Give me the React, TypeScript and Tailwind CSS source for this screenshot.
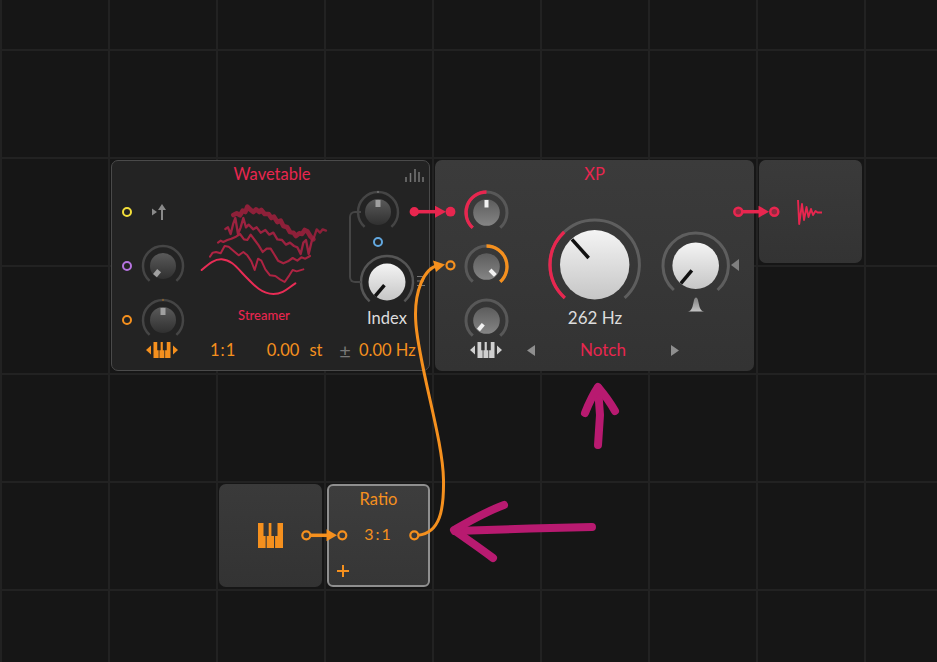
import React from "react";

const RED = "#e8264f";
const ORANGE = "#f5901e";

function polar(c: number, r: number, deg: number) {
  const a = ((deg - 90) * Math.PI) / 180;
  return [c + r * Math.cos(a), c + r * Math.sin(a)];
}
function arc(c: number, r: number, a: number, b: number) {
  const [x1, y1] = polar(c, r, a);
  const [x2, y2] = polar(c, r, b);
  const large = b - a > 180 ? 1 : 0;
  return `M${x1} ${y1}A${r} ${r} 0 ${large} 1 ${x2} ${y2}`;
}

type KnobProps = {
  id: string;
  ring: number;
  inner: number;
  ringWidth?: number;
  ringColor: string;
  top: string;
  bottom: string;
  angle: number;
  r1: number;
  r2: number;
  needle: string;
  needleWidth: number;
  value?: [number, number, string];
  tick?: string;
  className?: string;
};

function Knob(p: KnobProps) {
  const size = (p.ring + 3) * 2;
  const c = p.ring + 3;
  const [x1, y1] = polar(c, p.r1, p.angle);
  const [x2, y2] = polar(c, p.r2, p.angle);
  const w = p.ringWidth ?? 2.5;
  const [tx1, ty1] = polar(c, p.ring - 1, 0);
  const [tx2, ty2] = polar(c, p.ring + 1, 0);
  return (
    <svg width={size} height={size} viewBox={`0 0 ${size} ${size}`} className={`block shrink-0 ${p.className ?? ""}`}>
      <defs>
        <linearGradient id={p.id} x1="0" y1="0" x2="0" y2="1">
          <stop offset="0" stopColor={p.top} />
          <stop offset="1" stopColor={p.bottom} />
        </linearGradient>
      </defs>
      <path d={arc(c, p.ring, -138, 138)} fill="none" stroke={p.ringColor} strokeWidth={w} />
      {p.value && <path d={arc(c, p.ring, p.value[0], p.value[1])} fill="none" stroke={p.value[2]} strokeWidth={w + 0.3} />}
      {p.tick && <line x1={tx1} y1={ty1} x2={tx2} y2={ty2} stroke={p.tick} strokeWidth={2} />}
      <circle cx={c} cy={c} r={p.inner} fill={`url(#${p.id})`} />
      <line x1={x1} y1={y1} x2={x2} y2={y2} stroke={p.needle} strokeWidth={p.needleWidth} />
    </svg>
  );
}

function Piano({ color, w, h }: { color: string; w: number; h: number }) {
  return (
    <svg width={w} height={h} viewBox="0 0 25 25" className="block shrink-0" fill={color}>
      <path d="M0 0H5.5V13H7.6V25H0Z" />
      <path d="M10.7 0H13.4V13H16V25H8.7V13H10.7Z" />
      <path d="M19.5 0H25V25H17.1V13H19.5Z" />
    </svg>
  );
}

function PianoSwitch({ color }: { color: string }) {
  return (
    <svg width="32" height="16" viewBox="0 0 32 16" className="block" fill={color}>
      <path d="M0 8L5 3.5V12.5Z" />
      <path d="M32 8L27 3.5V12.5Z" />
      <g transform="translate(7.5 0) scale(0.68 0.64)">
        <path d="M0 0H5.5V13H7.6V25H0Z" />
        <path d="M10.5 0H13.7V13H16V25H8.7V13H10.5Z" />
        <path d="M19.5 0H25V25H17.1V13H19.5Z" />
      </g>
    </svg>
  );
}

function PortRing({ color }: { color: string }) {
  return <div className="w-[10px] h-[10px] rounded-full border-2 bg-transparent" style={{ borderColor: color }} />;
}

const darkKnob = { ring: 20, inner: 13, ringColor: "#454545", top: "#5a5a5a", bottom: "#303030", needle: "#a0a0a0", needleWidth: 5, r1: 5, r2: 12 };
const xpKnob = { ring: 20.5, inner: 13.3, ringWidth: 3, ringColor: "#585858", top: "#5c5c5c", bottom: "#858585", needle: "#f2f2f2", needleWidth: 4, r1: 5, r2: 12.5 };
const whiteKnob = { ringColor: "#5e5e5e", top: "#f4f4f4", bottom: "#c6c6c6", needle: "#111111" };

function Waves() {
  return (
    <svg width="145" height="115" viewBox="0 0 435 345" className="block ml-[7px] mt-[5px]" fill="none" strokeLinejoin="round" strokeLinecap="round">
      <polyline stroke="#8e2039" strokeWidth="14" points="130,75 140,70 150,76 158,62 166,66 172,50 180,58 190,66 198,58 208,66 214,60 224,72 236,72 244,84 252,80 262,96 272,92 280,108 292,112 300,126 310,128 318,138 328,130 336,132 344,120 352,124 362,140 370,148" />
      <polyline stroke="#8e2039" strokeWidth="7" points="370,148 380,118 390,128 398,118 408,122" />
      <polyline stroke="#9c2240" strokeWidth="7" points="106,117 114,112 122,132 130,100 136,84 144,132 152,112 160,84 168,112 176,104 190,118 200,112 212,128 226,120 238,134 250,128 262,148 276,150 288,164 300,158 312,168 322,172 332,192 340,158 348,150 356,192 366,150 372,142" />
      <polyline stroke="#a4233f" strokeWidth="6.5" points="84,158 92,152 100,156 112,150 124,146 138,140 150,132 162,148 172,150 182,134 194,150 206,166 218,186 230,176 242,176 252,192 264,212 280,220 294,214 308,204 322,212 334,202 346,206 360,198" />
      <polyline stroke="#ae2443" strokeWidth="6" points="60,200 68,188 78,186 92,190 104,168 116,170 130,182 146,196 160,186 172,196 184,214 194,240 204,206 214,212 226,238 240,256 256,258 270,268 284,276 298,256 308,240 320,244 340,238" />
      <path stroke="#e82c55" strokeWidth="6" d="M35 240C60 218 75 207 95 208C125 210 140 232 165 258C190 284 215 312 250 312C280 312 295 293 316 280" />
    </svg>
  );
}

export default function App() {
  const canvas =
    "relative w-[937px] h-[662px] overflow-hidden bg-[#161616] font-[family-name:Lato,sans-serif] bg-[linear-gradient(to_right,#222222_2px,transparent_2px),linear-gradient(to_bottom,#222222_2px,transparent_2px)] bg-[size:108px_108px] bg-[position:0px_49px]";
  return (
    <div className={canvas}>
      {/* Wavetable */}
      <div className="absolute left-[111px] top-[160px] w-[319px] h-[211px] rounded-[7px] border border-[#4a4a4a] bg-[#232323]">
        <div className="h-[24px] pt-[2px] flex items-center justify-center pl-[3px] text-[16.5px] text-[#e8264f]">Wavetable</div>
        <svg width="20" height="16" viewBox="0 0 20 16" className="absolute left-[292px] top-[6px]" stroke="#777777" strokeWidth="1.5">
          <path d="M2 15V10M6.5 15V6M11 15V2M15 15V5M19 15V10" />
        </svg>
        <div className="flex h-[162px]">
          <div className="w-[30px] flex flex-col">
            {["#f2de3a", "#b673e0", ORANGE].map((c) => (
              <div key={c} className="h-[54px] flex items-center justify-center">
                <PortRing color={c} />
              </div>
            ))}
          </div>
          <div className="w-[41px] flex flex-col">
            <div className="h-[54px] flex items-center justify-center pr-[5px]">
              <svg width="16" height="18" viewBox="0 0 16 18" fill="#8a8a8a">
                <path d="M0 5.5L5 9L0 12.5Z" />
                <path d="M10 1L14 7H11V17H9V7H6Z" />
              </svg>
            </div>
            <div className="h-[54px] flex items-center justify-center">
              <Knob id="wt1" {...darkKnob} angle={-140} r1={6} r2={12.5} />
            </div>
            <div className="h-[54px] flex items-center justify-center">
              <Knob id="wt2" {...darkKnob} angle={0} tick="#7a5a30" />
            </div>
          </div>
          <div className="w-[162px]">
            <Waves />
            <div className="mt-[2px] text-center text-[13px] leading-[16px] text-[#e8264f] font-medium">Streamer</div>
          </div>
          <div className="relative w-[84px]">
            <div className="absolute left-[4px] top-[26px] w-[12px] h-[72px] rounded-l-[6px] border-2 border-r-0 border-[#454545]" />
            <Knob id="wt3" {...darkKnob} angle={0} tick="#666666" className="ml-[10px] mt-[4px]" />
            <div className="ml-[28px] mt-[2px]">
              <PortRing color="#62a8e0" />
            </div>
            <Knob id="wt4" {...whiteKnob} ring={26} inner={18.5} angle={-140} r1={4} r2={18.5} needleWidth={3.5} ringColor="#555555" className="ml-[13px] mt-[6px]" />
            <div className="ml-[13px] w-[58px] -mt-[3px] text-center text-[16.5px] leading-[20px] text-[#dddddd]">Index</div>
            <svg width="8" height="13" viewBox="0 0 8 13" className="absolute left-[72px] top-[90px]" stroke="#777777" strokeWidth="1">
              <path d="M0 1.5H6M0 6H7M0 10.5H8" />
            </svg>
          </div>
        </div>
        <div className="-mt-[8px] flex items-center h-[22px] text-[16.5px] text-[#f5901e]">
          <div className="ml-[34px] w-[32px] flex justify-center">
            <PianoSwitch color={ORANGE} />
          </div>
          <div className="ml-[32px] w-[24px] text-center tracking-[1px]">1:1</div>
          <div className="ml-[31px] w-[36px] text-center">0.00</div>
          <div className="ml-[6px] w-[18px] text-center">st</div>
          <div className="ml-[12px] w-[16px] text-center text-[20px] leading-[20px] text-[#777777]">±</div>
          <div className="ml-[6px] whitespace-nowrap">0.00 Hz</div>
        </div>
      </div>

      {/* XP */}
      <div className="absolute left-[435px] top-[160px] w-[319px] h-[211px] rounded-[7px] bg-gradient-to-b from-[#3b3b3b] to-[#333333]">
        <div className="h-[25px] pt-[3px] flex items-center justify-center text-[16.5px] text-[#e8264f]">XP</div>
        <div className="flex h-[162px]">
          <div className="ml-[28px] w-[47px] flex flex-col">
            <div className="h-[54px] flex items-center justify-center">
              <Knob id="xp1" {...xpKnob} angle={0} value={[-138, 0, RED]} />
            </div>
            <div className="h-[54px] flex items-center justify-center">
              <Knob id="xp2" {...xpKnob} angle={135} value={[0, 138, ORANGE]} />
            </div>
            <div className="h-[54px] flex items-center justify-center">
              <Knob id="xp3" {...xpKnob} angle={-140} />
            </div>
          </div>
          <div className="ml-[37px] w-[96px] flex flex-col items-center">
            <Knob id="xp4" {...whiteKnob} ring={44.7} inner={34.7} ringWidth={3} angle={-42} r1={9} r2={34} needleWidth={3.5} value={[-138, -43, RED]} className="mt-[32px]" />
            <div className="-mt-[4px] text-[17px] leading-[20px] text-[#dddddd]">262 Hz</div>
          </div>
          <div className="ml-[17px] w-[72px] flex flex-col items-center relative">
            <Knob id="xp5" {...whiteKnob} ring={32.7} inner={23.3} ringWidth={3} angle={-140} r1={6} r2={23} needleWidth={3.5} className="mt-[45px]" />
            <svg width="18" height="15" viewBox="0 0 18 16" className="-mt-[4px]">
              <defs>
                <linearGradient id="bell" x1="0" y1="0" x2="0" y2="1">
                  <stop offset="0" stopColor="#808080" />
                  <stop offset="1" stopColor="#c4c4c4" />
                </linearGradient>
              </defs>
              <path d="M0 15.5C5 15 5.5 9 6.5 5C7 2 8 0.5 9 0.5C10 0.5 11 2 11.5 5C12.5 9 13 15 18 15.5Z" fill="url(#bell)" />
            </svg>
            <svg width="8" height="12" viewBox="0 0 8 12" className="absolute left-[71px] top-[74px]" fill="#808080">
              <path d="M8 0V12L0 6Z" />
            </svg>
          </div>
        </div>
        <div className="-mt-[8px] flex items-center h-[22px] text-[17px]">
          <div className="ml-[35px] w-[32px] flex justify-center">
            <PianoSwitch color="#d0d0d0" />
          </div>
          <svg width="8" height="11" viewBox="0 0 8 11" className="ml-[25px]" fill="#8f8f8f">
            <path d="M8 0V11L0 5.5Z" />
          </svg>
          <div className="w-[136px] text-center text-[#e8264f]">Notch</div>
          <svg width="8" height="11" viewBox="0 0 8 11" fill="#8f8f8f">
            <path d="M0 0V11L8 5.5Z" />
          </svg>
        </div>
      </div>

      {/* Output */}
      <div className="absolute left-[759px] top-[160px] w-[103px] h-[103px] rounded-[7px] bg-gradient-to-b from-[#3a3a3a] to-[#333333] flex items-center pl-[38px]">
        <svg width="26" height="26" viewBox="0 0 26 26" fill="none" stroke={RED} strokeWidth="1.9" strokeLinejoin="round">
          <path d="M1 1L2.2 25L5 5L7 21L9.5 8L11.5 18L14 10L16 16L18.5 12L20.5 13.5H25" />
        </svg>
      </div>

      {/* Keyboard */}
      <div className="absolute left-[219px] top-[484px] w-[103px] h-[103px] rounded-[7px] bg-gradient-to-b from-[#3a3a3a] to-[#333333] flex items-center pl-[39px]">
        <Piano color={ORANGE} w={25} h={25} />
      </div>

      {/* Ratio */}
      <div className="absolute left-[327px] top-[484px] w-[103px] h-[103px] rounded-[6px] border-2 border-[#8f8f8f] bg-gradient-to-b from-[#3d3d3d] to-[#363636] flex flex-col items-center text-[#f5901e]">
        <div className="mt-[3px] text-[16.5px] leading-[20px]">Ratio</div>
        <div className="mt-[15px] text-[16px] leading-[20px] tracking-[2px]">3:1</div>
        <div className="mt-[21px] self-start ml-[8px]">
          <svg width="12" height="12" viewBox="0 0 12 12" stroke={ORANGE} strokeWidth="2" className="block">
            <path d="M6 0V12M0 6H12" />
          </svg>
        </div>
      </div>

      {/* Wires and hand-drawn arrows */}
      <svg width="937" height="662" viewBox="0 0 937 662" className="absolute inset-0 pointer-events-none" fill="none">
        <circle cx="414.3" cy="211.7" r="4.7" fill={RED} />
        <path d="M414 211.7H438" stroke={RED} strokeWidth="3.5" />
        <path d="M446 211.7L435 205.7V217.7Z" fill={RED} />
        <circle cx="450.5" cy="211.7" r="4.9" fill={RED} />

        <path d="M418 535.3C440 533 444 510 443.5 480C443 440 420 370 416 325C413 290 425 268 438 265.5" stroke={ORANGE} strokeWidth="3" />
        <path d="M445 264.5L433 260.5L436 272Z" fill={ORANGE} />
        <circle cx="450.5" cy="265.3" r="4" stroke={ORANGE} strokeWidth="2.2" />

        <circle cx="306.3" cy="535.3" r="4" stroke={ORANGE} strokeWidth="2.2" />
        <path d="M310 535.3H330" stroke={ORANGE} strokeWidth="3.5" />
        <path d="M337 535.3L326.5 529.3V541.3Z" fill={ORANGE} />
        <circle cx="342.3" cy="535.3" r="4" stroke={ORANGE} strokeWidth="2.2" />
        <circle cx="414.3" cy="535.3" r="4" stroke={ORANGE} strokeWidth="2.2" />

        <circle cx="738.3" cy="211.7" r="4" stroke={RED} strokeWidth="2.5" fill="#8e2a40" />
        <path d="M742 211.7H762" stroke={RED} strokeWidth="3.5" />
        <path d="M769 211.7L758.5 205.7V217.7Z" fill={RED} />
        <circle cx="774.3" cy="211.7" r="4" stroke={RED} strokeWidth="2.5" fill="#8e2a40" />

        <g stroke="#b81a70" strokeWidth="8" strokeLinecap="round" strokeLinejoin="round">
          <path d="M592 527L530 528.5L455 531" />
          <path d="M504 505C485 512 468 522 454 530C465 538 480 548 493 558" />
          <path d="M598 445L600 415L598 388" />
          <path d="M585 413C589 403 594 393 598 387C603 393 610 402 615 411" />
        </g>
      </svg>
    </div>
  );
}
